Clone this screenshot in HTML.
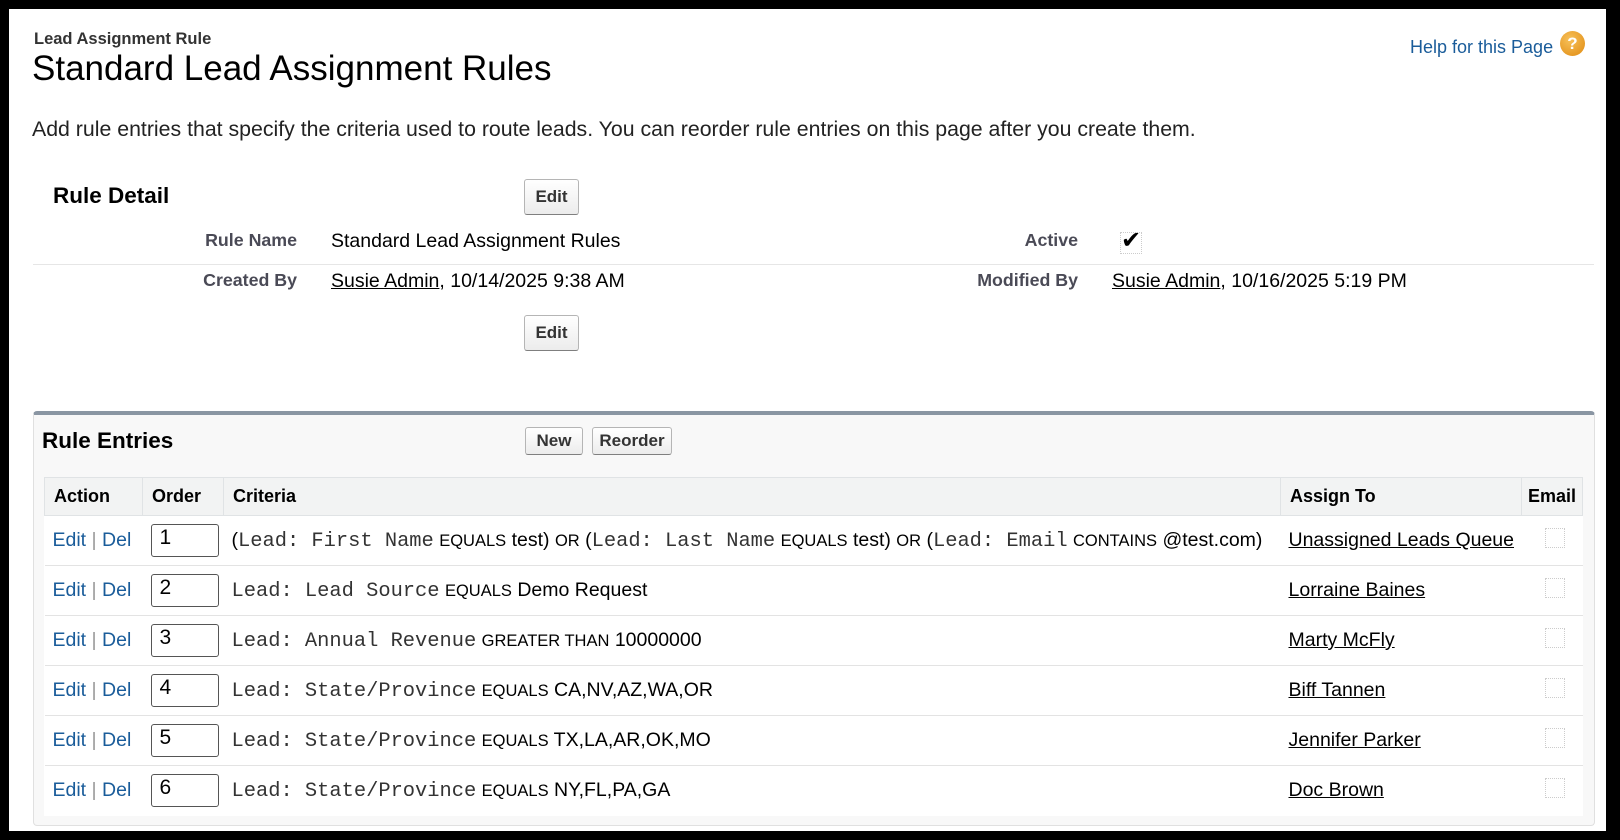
<!DOCTYPE html>
<html><head><meta charset="utf-8"><style>
*{margin:0;padding:0;box-sizing:border-box}
body{width:1620px;height:840px;background:#000;font-family:"Liberation Sans",Arial,sans-serif;color:#000;position:relative;overflow:hidden}
.page{position:absolute;left:9px;top:9px;width:1597px;height:822px;background:#fff}
.a{position:absolute;white-space:nowrap}
.btn{position:absolute;border:1px solid #b5b5b5;border-bottom-color:#7f7f7f;border-radius:3px;background:linear-gradient(#fff,#ececec);font-weight:bold;font-size:17px;color:#333;text-align:center}
.lbl{font-weight:bold;color:#4a4a56;font-size:17.8px;text-align:right}
u{text-decoration:underline}
.box{position:absolute;left:33px;top:411px;width:1562px;height:415px;background:#f8f8f8;border-top:4px solid #8a96a3;border-radius:4px;border-left:1px solid #e0e0e0;border-right:1px solid #e0e0e0;border-bottom:1px solid #e0e0e0}
table{position:absolute;left:44px;top:477px;width:1539px;border-collapse:collapse;background:#fff;font-size:19.5px}
th{background:#f2f3f3;height:38px;text-align:left;font-size:18px;padding-left:9px;border:1px solid #e0e3e5}
td{height:50px;border-top:1px solid #e3e3e3;padding-left:8px;white-space:nowrap}
.lk{color:#1a5c9a}
.sep{color:#999}
.inp{display:inline-block;width:68px;height:33px;border:1px solid #555;border-radius:3px;font-size:21px;padding:1px 0 0 8px;vertical-align:middle}
.m{font-family:"Liberation Mono",monospace;font-size:20.4px;color:#333}
.k{font-size:16.5px}
.cb{display:inline-block;width:20px;height:20px;border:1px dotted #ccc;margin-left:15px}
</style></head><body>
<div class="page"></div>
<div class="a" style="left:34px;top:30px;font-size:16.5px;font-weight:bold;color:#333">Lead Assignment Rule</div>
<div class="a" style="left:32px;top:49px;font-size:35px">Standard Lead Assignment Rules</div>
<div class="a" style="left:1410px;top:37px;font-size:18px;color:#1a5c9a">Help for this Page</div>
<div class="a" style="left:1560px;top:31px;width:25px;height:25px;border-radius:50%;background:radial-gradient(circle at 40% 35%,#f7c15a,#e08a10);color:#fff;font-weight:bold;font-size:17px;text-align:center;line-height:25px">?</div>
<div class="a" style="left:32px;top:117px;font-size:21.3px;color:#222">Add rule entries that specify the criteria used to route leads. You can reorder rule entries on this page after you create them.</div>
<div class="a" style="left:53px;top:183px;font-size:22.5px;font-weight:bold">Rule Detail</div>
<div class="btn" style="left:524px;top:179px;width:55px;height:36px;line-height:34px">Edit</div>
<div class="a lbl" style="left:150px;width:147px;top:230px">Rule Name</div>
<div class="a" style="left:331px;top:230px;font-size:19.5px">Standard Lead Assignment Rules</div>
<div class="a lbl" style="left:930px;width:148px;top:230px">Active</div>
<div class="a" style="left:1120px;top:232px;width:22px;height:22px;border:1px dotted #ccc"></div>
<div class="a" style="left:1121px;top:226px;font-size:24px">✔</div>
<div class="a" style="left:33px;top:264px;width:1561px;height:1px;background:#e6e6e6"></div>
<div class="a lbl" style="left:150px;width:147px;top:270px">Created By</div>
<div class="a" style="left:331px;top:270px;font-size:19.5px"><u>Susie Admin</u>, 10/14/2025 9:38 AM</div>
<div class="a lbl" style="left:930px;width:148px;top:270px">Modified By</div>
<div class="a" style="left:1112px;top:270px;font-size:19.5px"><u>Susie Admin</u>, 10/16/2025 5:19 PM</div>
<div class="btn" style="left:524px;top:315px;width:55px;height:36px;line-height:34px">Edit</div>
<div class="box"></div>
<div class="a" style="left:42px;top:428px;font-size:22.5px;font-weight:bold">Rule Entries</div>
<div class="btn" style="left:525px;top:427px;width:58px;height:28px;line-height:26px">New</div>
<div class="btn" style="left:592px;top:427px;width:80px;height:28px;line-height:26px">Reorder</div>
<table>
<tr><th style="width:98px">Action</th><th style="width:81px">Order</th><th>Criteria</th><th style="width:241px">Assign To</th><th style="width:61px;padding-left:6px">Email</th></tr>
<tr><td><span class="lk">Edit</span> <span class="sep">|</span> <span class="lk">Del</span></td><td><span class="inp">1</span></td><td>(<span class="m">Lead: First Name</span> <span class="k">EQUALS</span> test) <span class="k">OR</span> (<span class="m">Lead: Last Name</span> <span class="k">EQUALS</span> test) <span class="k">OR</span> (<span class="m">Lead: Email</span> <span class="k">CONTAINS</span> @test.com)</td><td><u>Unassigned Leads Queue</u></td><td><span class="cb"></span></td></tr>
<tr><td><span class="lk">Edit</span> <span class="sep">|</span> <span class="lk">Del</span></td><td><span class="inp">2</span></td><td><span class="m">Lead: Lead Source</span> <span class="k">EQUALS</span> Demo Request</td><td><u>Lorraine Baines</u></td><td><span class="cb"></span></td></tr>
<tr><td><span class="lk">Edit</span> <span class="sep">|</span> <span class="lk">Del</span></td><td><span class="inp">3</span></td><td><span class="m">Lead: Annual Revenue</span> <span class="k">GREATER THAN</span> 10000000</td><td><u>Marty McFly</u></td><td><span class="cb"></span></td></tr>
<tr><td><span class="lk">Edit</span> <span class="sep">|</span> <span class="lk">Del</span></td><td><span class="inp">4</span></td><td><span class="m">Lead: State/Province</span> <span class="k">EQUALS</span> CA,NV,AZ,WA,OR</td><td><u>Biff Tannen</u></td><td><span class="cb"></span></td></tr>
<tr><td><span class="lk">Edit</span> <span class="sep">|</span> <span class="lk">Del</span></td><td><span class="inp">5</span></td><td><span class="m">Lead: State/Province</span> <span class="k">EQUALS</span> TX,LA,AR,OK,MO</td><td><u>Jennifer Parker</u></td><td><span class="cb"></span></td></tr>
<tr><td><span class="lk">Edit</span> <span class="sep">|</span> <span class="lk">Del</span></td><td><span class="inp">6</span></td><td><span class="m">Lead: State/Province</span> <span class="k">EQUALS</span> NY,FL,PA,GA</td><td><u>Doc Brown</u></td><td><span class="cb"></span></td></tr>
</table>
</body></html>
